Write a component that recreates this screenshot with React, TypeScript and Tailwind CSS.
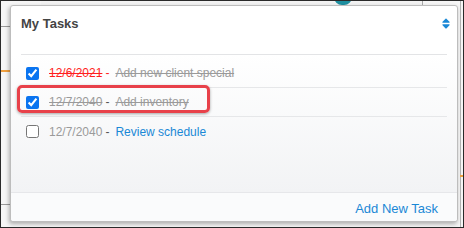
import { FaSort } from 'react-icons/fa';

type Task = {
  id: number;
  date: string;
  title: string;
  done: boolean;
  overdue?: boolean;
  highlighted?: boolean;
};

const tasks: Task[] = [
  { id: 1, date: '12/6/2021', title: 'Add new client special', done: true, overdue: true },
  { id: 2, date: '12/7/2040', title: 'Add inventory', done: true, highlighted: true },
  { id: 3, date: '12/7/2040', title: 'Review schedule', done: false },
];

const TaskRow = ({ task, last }: { task: Task; last: boolean }) => {
  const dateColor = task.done && task.overdue ? 'text-[#ff1f1f]' : 'text-[#9a9a9a]';
  return (
    <li className={`relative flex items-center h-[29px] ${last ? '' : 'border-b border-[#e6e7e9]'}`}>
      <input
        type="checkbox"
        defaultChecked={task.done}
        className="ml-[5px] m-0 w-[13px] h-[13px] accent-[#0a74f0]"
      />
      <span className={`ml-[10px] ${dateColor} ${task.done ? 'line-through' : ''}`}>{task.date}</span>
      <span className={`ml-[3px] ${task.overdue ? 'text-[#ff1f1f]' : 'text-[#555]'}`}>-</span>
      {task.done ? (
        <span className="ml-[6px] text-[#9a9a9a] line-through">{task.title}</span>
      ) : (
        <a href="#" className="ml-[6px] text-[#1a88d6]">{task.title}</a>
      )}
      {/* callout marker over the row */}
      {task.highlighted && (
        <div className="absolute left-[-4px] top-[-3px] w-[193px] h-[28px] rounded-[5px] border-[3px] border-[#e8414a] shadow-[0_1px_3px_rgba(0,0,0,0.35)] pointer-events-none" />
      )}
    </li>
  );
};

export default function App() {
  return (
    <div
      className="relative w-[464px] h-[228px] border border-[#2a2a2a] bg-[#f6f6f6] pl-[9px] pt-[4px] pr-[5px] pb-[5px] overflow-hidden"
      style={{ fontFamily: '"Liberation Sans", Arial, sans-serif' }}
    >
      {/* bits of the page behind the panel */}
      <div className="absolute left-0 top-[25px] w-[10px] h-px bg-[#9a9a9a]" />
      <div className="absolute left-0 top-[69px] w-[9px] h-[2px] bg-[#f0a040]" />
      <div className="absolute left-0 top-[203px] w-[10px] h-px bg-[#9a9a9a]" />
      <div className="absolute left-[40px] top-0 w-[382px] h-[5px] border-b border-r border-[#a8a8a8] bg-[#f3f3f3]" />
      <div className="absolute left-[333px] top-[-12px] w-[18px] h-[16px] rounded-full bg-[#1e8fa0]" />
      <div className="absolute right-[2px] top-0 w-px h-full bg-[#b5b5b5]" />
      <div className="absolute right-0 top-[174px] w-[3px] h-[2px] bg-[#f0a040]" />

      <div className="relative flex flex-col h-full rounded-[3px] border border-[#bdbdbd] bg-white shadow-[-1px_2px_4px_rgba(0,0,0,0.3)]">
        <div className="flex items-start justify-between h-[48px] pl-[10px] pr-[6px] pt-[10px]">
          <h2 className="text-[13px] leading-[16px] font-bold text-[#444]">My Tasks</h2>
          <FaSort className="mt-[1px] w-[10px] h-[13px] text-[#1a88d6]" />
        </div>

        <div className="flex-1 px-[10px] bg-gradient-to-b from-white to-[#f2f3f5]">
          <ul className="border-t border-[#e3e4e6] pt-[4px] text-[12px] leading-[14px]">
            {tasks.map((t, i) => (
              <TaskRow key={t.id} task={t} last={i === tasks.length - 1} />
            ))}
          </ul>
        </div>

        <div className="flex items-center justify-end h-[29px] pr-[19px] pt-[3px] border-t border-[#e6e7ea] bg-[#fafbfc] rounded-b-[3px]">
          <a href="#" className="text-[13px] text-[#1a88d6]">Add New Task</a>
        </div>
      </div>
    </div>
  );
}
